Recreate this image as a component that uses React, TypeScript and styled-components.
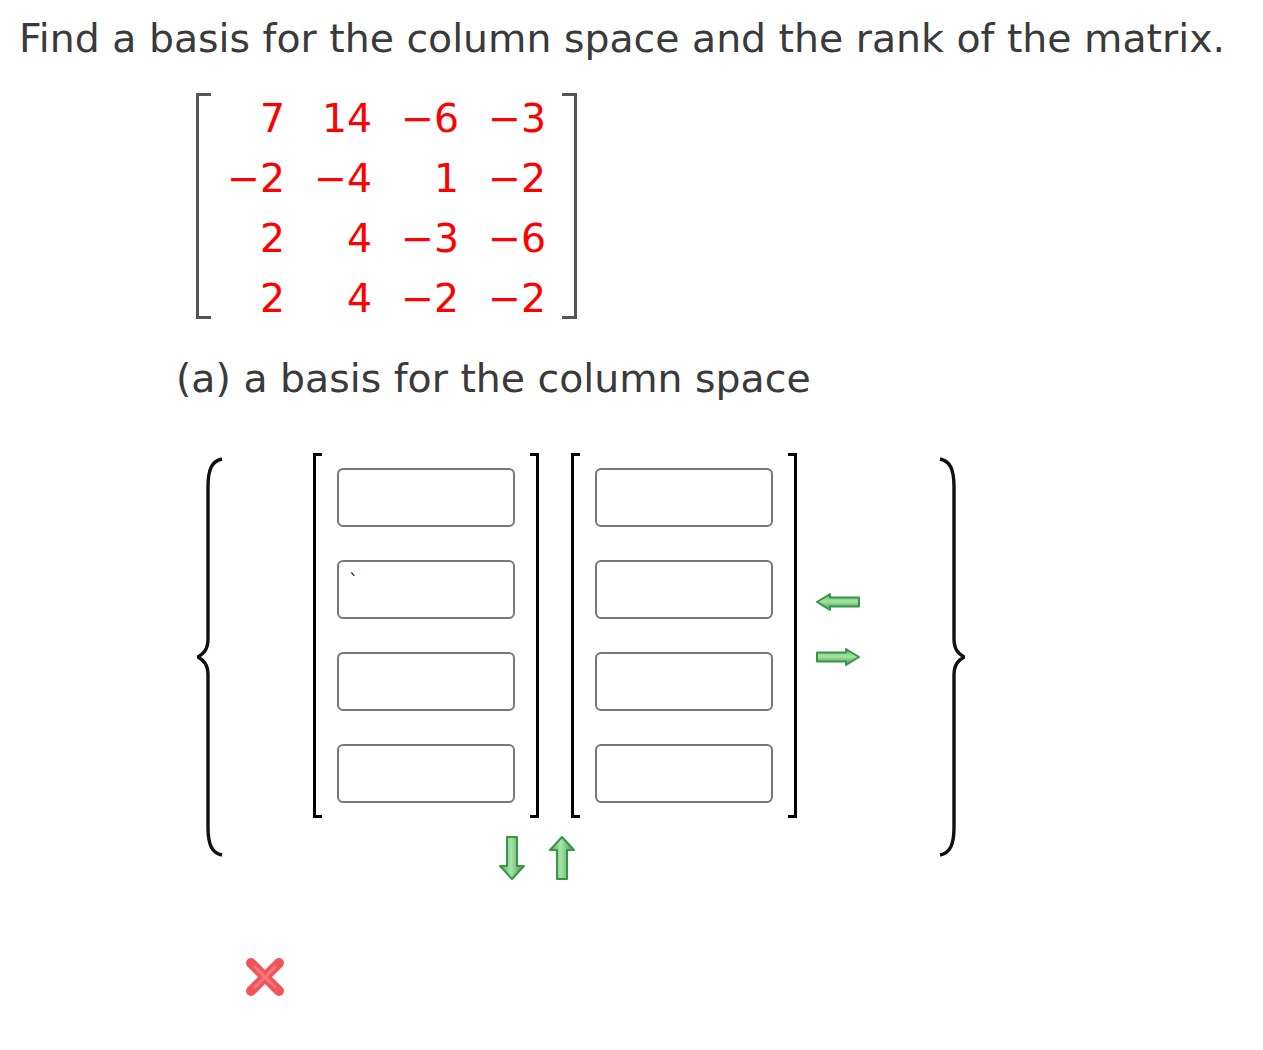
import styled, { createGlobalStyle } from "styled-components";

const GlobalStyle = createGlobalStyle`
  html, body {
    margin: 0;
    padding: 0;
    background: #ffffff;
  }
  body {
    font-family: "DejaVu Sans", Verdana, sans-serif;
    color: #3a3a3a;
  }
`;

const Page = styled.div`
  padding: 16px 0 40px 19px;
  width: 1263px;
  box-sizing: border-box;
`;

const Prompt = styled.p`
  margin: 0;
  font-size: 39.4px;
  line-height: 45px;
`;

const MatrixWrap = styled.div`
  display: flex;
  margin: 26px 0 0 177px;
`;

const MatBracket = styled.div<{ $side: "left" | "right" }>`
  width: 12px;
  margin: 6px 0 9px;
  border: 3px solid #555;
  ${(p) => (p.$side === "left" ? "border-right: none;" : "border-left: none;")}
`;

const MatGrid = styled.div`
  display: grid;
  grid-template-columns: 74px 87px 87px 87px;
  grid-auto-rows: 60px;
  padding-top: 1px;
  margin-right: 16px;
`;

const Entry = styled.span`
  color: #ff0000;
  font-size: 39.4px;
  line-height: 60px;
  text-align: right;
`;

const SubPrompt = styled.p`
  margin: 28px 0 0 157px;
  font-size: 39.4px;
  line-height: 45px;
`;

const BasisRow = styled.div`
  display: flex;
  align-items: flex-start;
  margin: 52px 0 0 178px;
`;

const Brace = styled.svg`
  display: block;
  margin-top: 4px;
  flex: none;
`;

const VectorGroup = styled.div`
  display: flex;
  flex-direction: column;
  margin-left: 89px;
`;

const Vectors = styled.div`
  display: flex;
  gap: 32px;
`;

const Vector = styled.div`
  display: flex;
`;

const VecBracket = styled.div<{ $side: "left" | "right" }>`
  width: 6px;
  height: 359px;
  border: 3px solid #000;
  ${(p) => (p.$side === "left" ? "border-right: none;" : "border-left: none;")}
`;

const Cells = styled.div`
  display: flex;
  flex-direction: column;
  gap: 33px;
  padding: 15px 15px 0;
`;

const Cell = styled.input`
  box-sizing: border-box;
  width: 178px;
  height: 59px;
  border: 2px solid #777;
  border-radius: 6px;
  padding: 0 10px 18px;
  font-family: "DejaVu Sans", Verdana, sans-serif;
  font-size: 18px;
  line-height: 20px;
  color: #222;
  background: #fff;
  outline: none;
`;

const StackArrows = styled.div`
  display: flex;
  gap: 24px;
  margin: 18px 0 0 186px;
`;

const SideArrows = styled.div`
  display: flex;
  flex-direction: column;
  gap: 37px;
  margin: 140px 0 0 19px;
`;

const RightBrace = styled(Brace)`
  margin-left: 78px;
`;

const Feedback = styled.div`
  margin: 76px 0 0 225px;
`;

const gradientDefs = (id: string, vertical: boolean) => (
  <defs>
    <linearGradient
      id={id}
      x1="0"
      y1="0"
      x2={vertical ? "1" : "0"}
      y2={vertical ? "0" : "1"}
    >
      <stop offset="0" stopColor="#4fb35c" />
      <stop offset="0.45" stopColor="#a6e3a6" />
      <stop offset="1" stopColor="#3f9f4c" />
    </linearGradient>
  </defs>
);

function SideArrow({ dir }: { dir: "left" | "right" }) {
  const id = `ha-${dir}`;
  return (
    <svg width="44" height="18" viewBox="0 0 44 18">
      {gradientDefs(id, false)}
      <path
        d="M1 4.5 H30 V1 L43 9 L30 17 V13.5 H1 Z"
        fill={`url(#${id})`}
        stroke="#3a9447"
        strokeWidth="2"
        strokeLinejoin="round"
        transform={dir === "left" ? "translate(44 0) scale(-1 1)" : undefined}
      />
    </svg>
  );
}

function StackArrow({ dir }: { dir: "up" | "down" }) {
  const id = `va-${dir}`;
  return (
    <svg width="26" height="44" viewBox="0 0 26 44">
      {gradientDefs(id, true)}
      <path
        d="M8 1 H18 V30 H25 L13 43 L1 30 H8 Z"
        fill={`url(#${id})`}
        stroke="#3a9447"
        strokeWidth="2"
        strokeLinejoin="round"
        transform={dir === "up" ? "translate(0 44) scale(1 -1)" : undefined}
      />
    </svg>
  );
}

const bracePath =
  "M25 2 C15 4 11 12 11 30 V182 C11 193 6 197 1 200 C6 203 11 207 11 218 V370 C11 388 15 396 25 398";

const matrix = [
  ["7", "14", "\u22126", "\u22123"],
  ["\u22122", "\u22124", "1", "\u22122"],
  ["2", "4", "\u22123", "\u22126"],
  ["2", "4", "\u22122", "\u22122"],
];

function ColumnVector({ first }: { first?: boolean }) {
  return (
    <Vector>
      <VecBracket $side="left" />
      <Cells>
        <Cell />
        <Cell defaultValue={first ? "`" : ""} />
        <Cell />
        <Cell />
      </Cells>
      <VecBracket $side="right" />
    </Vector>
  );
}

export default function App() {
  return (
    <>
      <GlobalStyle />
      <Page>
        <Prompt>Find a basis for the column space and the rank of the matrix.</Prompt>

        <MatrixWrap>
          <MatBracket $side="left" />
          <MatGrid>
            {matrix.flat().map((v, i) => (
              <Entry key={i}>{v}</Entry>
            ))}
          </MatGrid>
          <MatBracket $side="right" />
        </MatrixWrap>

        <SubPrompt>(a) a basis for the column space</SubPrompt>

        <BasisRow>
          <Brace width="27" height="400" viewBox="0 0 27 400">
            <path d={bracePath} fill="none" stroke="#111" strokeWidth="3.4" />
          </Brace>

          <VectorGroup>
            <Vectors>
              <ColumnVector first />
              <ColumnVector />
            </Vectors>
            <StackArrows>
              <StackArrow dir="down" />
              <StackArrow dir="up" />
            </StackArrows>
          </VectorGroup>

          <SideArrows>
            <SideArrow dir="left" />
            <SideArrow dir="right" />
          </SideArrows>

          <RightBrace width="27" height="400" viewBox="0 0 27 400">
            <path
              d={bracePath}
              fill="none"
              stroke="#111"
              strokeWidth="3.4"
              transform="translate(27 0) scale(-1 1)"
            />
          </RightBrace>
        </BasisRow>

        <Feedback>
          <svg width="42" height="42" viewBox="0 0 42 42">
            <path
              d="M7 7 L35 35 M35 7 L7 35"
              stroke="#f1545a"
              strokeWidth="10"
              strokeLinecap="round"
            />
            <path
              d="M11 11 L31 31 M31 11 L11 31"
              stroke="#f6767b"
              strokeWidth="3"
              strokeLinecap="round"
            />
          </svg>
        </Feedback>
      </Page>
    </>
  );
}
